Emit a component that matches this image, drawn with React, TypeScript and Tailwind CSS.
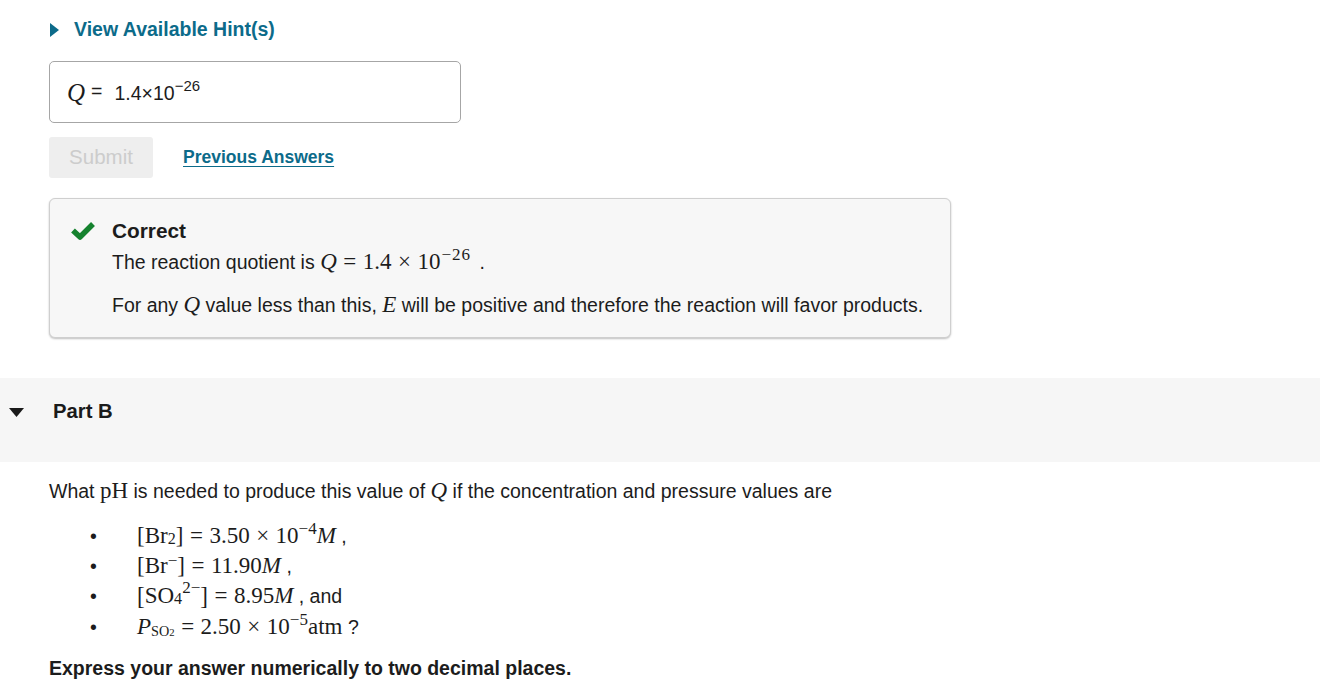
import { FC, ReactNode } from "react";

const TEAL = "text-[#0c6b8a]";

// small helpers for the math bits (KaTeX-like look)
const MI: FC<{ children: ReactNode }> = ({ children }) => (
  <span className="italic">{children}</span>
);

const Sup: FC<{ children: ReactNode; className?: string; low?: boolean }> = ({ children, className, low }) => (
  <sup
    className={`relative inline-block text-[0.74em] leading-[0.75] align-baseline ${
      low ? "-top-[0.42em]" : "-top-[0.55em]"
    } ${className ?? ""}`}
  >
    {children}
  </sup>
);

const Sub: FC<{ children: ReactNode; className?: string }> = ({ children, className }) => (
  <sub className={`relative inline-block text-[0.7em] leading-[0.75] align-baseline top-[0.08em] ${className ?? ""}`}>
    {children}
  </sub>
);

const Math: FC<{ children: ReactNode }> = ({ children }) => (
  <span className="font-['Liberation_Serif','DejaVu_Serif',serif] text-[23px] leading-none">
    {children}
  </span>
);

const Op: FC<{ children: ReactNode }> = ({ children }) => (
  <span className="mx-[6.5px]">{children}</span>
);

const Br: FC<{ children: ReactNode }> = ({ children }) => (
  <span className="inline-block scale-y-[1.12] origin-[50%_40%]">{children}</span>
);

const HintHeader = () => (
  <div className="flex items-center h-[26px]">
    <svg width="9" height="14" viewBox="0 0 9 14" className="ml-[1px]">
      <polygon points="0,0 9,7 0,14" fill="#0c6b8a" />
    </svg>
    <span className={`ml-[15px] text-[19.5px] font-bold ${TEAL}`}>View Available Hint(s)</span>
  </div>
);

const AnswerBox = () => (
  <div className="mt-[18px] w-[412px] h-[62px] border border-[#a6a6a6] rounded-[5px] flex items-center pl-[17px]">
    <span className="font-['Liberation_Serif',serif] italic text-[25px] leading-none">Q</span>
    <span className="ml-[6px] text-[19.5px]">=</span>
    <span className="ml-[12px] text-[19.5px] mt-[4px]">
      1.4×10
      <sup className="relative text-[15px] leading-none align-baseline -top-[9px]">−26</sup>
    </span>
  </div>
);

const SubmitRow = () => (
  <div className="mt-[14px] flex items-center">
    <button className="w-[104px] h-[41px] bg-[#eeeeee] rounded-[3px] text-[20.5px] text-[#cccccc]">
      Submit
    </button>
    <a href="#" className={`ml-[30px] text-[17.5px] font-bold underline underline-offset-[3px] ${TEAL}`}>
      Previous Answers
    </a>
  </div>
);

const CheckIcon = () => (
  <svg width="26" height="20" viewBox="0 0 26 20">
    <polyline
      points="3,9.5 10,16 23,3"
      fill="none"
      stroke="#15822e"
      strokeWidth="5.5"
      strokeLinejoin="round"
    />
  </svg>
);

const Feedback = () => (
  <div className="mt-[20px] w-[902px] h-[140px] bg-[#f7f7f7] border border-[#cfcfcf] rounded-[6px] shadow-[0_1px_2px_rgba(0,0,0,0.25)] flex pt-[20px]">
    <div className="w-[62px] pl-[20px] pt-[2px]">
      <CheckIcon />
    </div>
    <div className="text-[19.5px] text-[#1c1c1c]">
      <div className="text-[20.8px] font-bold leading-[24px]">Correct</div>
      <p className="mt-[3px] leading-[32px]">
        The reaction quotient is{" "}
        <Math>
          <MI>Q</MI>
          <Op>=</Op>1.4<Op>×</Op>10
          <Sup className="ml-[1px] tracking-[1px]">−26</Sup>
        </Math>{" "}
        <span className="ml-[3px]">.</span>
      </p>
      <p className="mt-[14px] leading-[26px]">
        For any{" "}
        <Math>
          <MI>Q</MI>
        </Math>{" "}
        value less than this,{" "}
        <Math>
          <MI>E</MI>
        </Math>{" "}
        will be positive and therefore the reaction will favor products.
      </p>
    </div>
  </div>
);

const PartBHeader = () => (
  <div className="mt-[40px] h-[84px] bg-[#f6f6f6] flex items-start pt-[21px]">
    <svg width="15" height="9" viewBox="0 0 15 9" className="ml-[9px] mt-[9px]">
      <polygon points="0,0 15,0 7.5,9" fill="#1a1a1a" />
    </svg>
    <span className="ml-[29px] text-[20.3px] leading-[24px] font-bold text-[#1a1a1a]">Part B</span>
  </div>
);

const Bullet = () => <span className="w-[88px] pl-[41px] text-[19.5px] shrink-0">•</span>;

const Question = () => (
  <div className="pl-[49px] text-[19.5px] text-[#1c1c1c]">
    <p className="mt-[16px] leading-[26px]">
      What{" "}
      <Math>pH</Math> is needed to produce this value of{" "}
      <Math>
        <MI>Q</MI>
      </Math>{" "}
      if the concentration and pressure values are
    </p>
    <ul className="mt-[19px] ml-[-49px]">
      <li className="flex items-center h-[27px]">
        <span className="w-[49px] shrink-0" />
        <Bullet />
        <span>
          <Math>
            [Br<Sub>2</Sub>]<Op>=</Op>3.50<Op>×</Op>10<Sup>−4</Sup>
            <MI>M</MI>
          </Math>{" "}
          ,
        </span>
      </li>
      <li className="flex items-center h-[34px]">
        <span className="w-[49px] shrink-0" />
        <Bullet />
        <span>
          <Math>
            [Br<Sup low>−</Sup>]<Op>=</Op>11.90<MI>M</MI>
          </Math>{" "}
          ,
        </span>
      </li>
      <li className="flex items-end h-[30px] pb-[3px]">
        <span className="w-[49px] shrink-0" />
        <Bullet />
        <span>
          <Math>
            <Br>[</Br>SO<Sub>4</Sub>
            <Sup>2−</Sup>
            <Br>]</Br>
            <Op>=</Op>8.95<MI>M</MI>
          </Math>{" "}
          , and
        </span>
      </li>
      <li className="flex items-center h-[28px]">
        <span className="w-[49px] shrink-0" />
        <Bullet />
        <span>
          <Math>
            <MI>P</MI>
            <Sub className="text-[0.62em]">
              SO<span className="text-[0.75em]">2</span>
            </Sub>
            <Op>=</Op>2.50<Op>×</Op>10<Sup>−5</Sup>atm
          </Math>{" "}
          ?
        </span>
      </li>
    </ul>
    <p className="mt-[13px] font-bold leading-[26px]">
      Express your answer numerically to two decimal places.
    </p>
  </div>
);

export default function App() {
  return (
    <div className="min-h-[688px] w-[1320px] bg-white font-['Liberation_Sans',Arial,sans-serif] text-[#1c1c1c] overflow-hidden">
      <div className="pl-[49px] pt-[17px]">
        <HintHeader />
        <AnswerBox />
        <SubmitRow />
        <Feedback />
      </div>
      <PartBHeader />
      <Question />
    </div>
  );
}
